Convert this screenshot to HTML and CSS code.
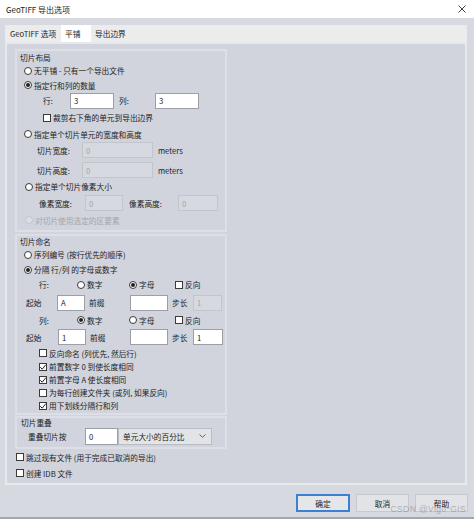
FILE: index.html
```html
<!DOCTYPE html>
<html lang="zh-CN">
<head>
    <meta charset="UTF-8">
    <meta name="viewport" content="width=device-width, initial-scale=1.0">
    <title>GeoTIFF 导出选项</title>
    <link rel="stylesheet" href="styles.css">
</head>
<body>
    <div class="dialog">
        <div class="titleBar">
            <span>GeoTIFF 导出选项</span>
            <svg class="closeIcon" width="8" height="8" viewBox="0 0 8 8">
                <path d="M0.5 0.5 L7.5 7.5 M7.5 0.5 L0.5 7.5" stroke="#2b2b2b" stroke-width="0.9" fill="none"/>
            </svg>
        </div>

        <div class="frame">
            <div class="tabs">
                <div class="tab tabFirst">GeoTIFF 选项</div>
                <div class="tab tabActive">平铺</div>
                <div class="tab tabLast">导出边界</div>
            </div>

            <div class="panel">
                <!-- 切片布局 -->
                <div class="group groupLayout">
                    <div class="groupTitle h12">切片布局</div>
                    <div class="row h15 in7"><span class="radio"></span>无平铺 - 只有一个导出文件</div>
                    <div class="row h14 in7"><span class="radio on"></span>指定行和列的数量</div>
                    <div class="row h17 in26">
                        <span class="lbl w27">行:</span>
                        <span class="field w44">3</span>
                        <span class="lbl w36 ml5">列:</span>
                        <span class="field w44">3</span>
                    </div>
                    <div class="row h17 in26"><span class="check"></span>裁剪右下角的单元到导出边界</div>
                    <div class="row h16 in7"><span class="radio"></span>指定单个切片单元的宽度和高度</div>
                    <div class="row h16 in20">
                        <span class="lbl w45">切片宽度:</span>
                        <span class="field off w71">0</span>
                        <span class="unit">meters</span>
                    </div>
                    <div class="row h16 in20 mt4">
                        <span class="lbl w45">切片高度:</span>
                        <span class="field off w71">0</span>
                        <span class="unit">meters</span>
                    </div>
                    <div class="row h17 in8"><span class="radio"></span>指定单个切片像素大小</div>
                    <div class="row h16 in22">
                        <span class="lbl w46">像素宽度:</span>
                        <span class="field off w38">0</span>
                        <span class="lbl w49 ml6">像素高度:</span>
                        <span class="field off w40">0</span>
                    </div>
                    <div class="row h18 in8 muted"><span class="radio dis"></span>对切片使用选定的区要素</div>
                </div>

                <!-- 切片命名 -->
                <div class="group groupNaming">
                    <div class="groupTitle h10">切片命名</div>
                    <div class="row h17 in7"><span class="radio"></span>序列编号 (按行优先的顺序)</div>
                    <div class="row h13 in7"><span class="radio on"></span>分隔 行/列 的字母或数字</div>
                    <div class="row h17 in22">
                        <span class="lbl w38">行:</span>
                        <span class="opt w52"><span class="radio"></span>数字</span>
                        <span class="opt w46"><span class="radio on"></span>字母</span>
                        <span class="opt"><span class="check"></span>反向</span>
                    </div>
                    <div class="row h19 in9">
                        <span class="lbl w31">起始</span>
                        <span class="field w28">A</span>
                        <span class="lbl w41 ml4">前缀</span>
                        <span class="field w38"></span>
                        <span class="lbl w21 ml4">步长</span>
                        <span class="field off w29">1</span>
                    </div>
                    <div class="row h16 in22">
                        <span class="lbl w38">列:</span>
                        <span class="opt w52"><span class="radio on"></span>数字</span>
                        <span class="opt w46"><span class="radio"></span>字母</span>
                        <span class="opt"><span class="check"></span>反向</span>
                    </div>
                    <div class="row h18 in9">
                        <span class="lbl w32">起始</span>
                        <span class="field w28">1</span>
                        <span class="lbl w40 ml4">前缀</span>
                        <span class="field w38"></span>
                        <span class="lbl w21 ml4">步长</span>
                        <span class="field w30">1</span>
                    </div>
                    <div class="row h14 in22"><span class="check"></span>反向命名 (列优先, 然后行)</div>
                    <div class="row h13 in22">
                        <span class="check on"><svg width="8" height="8" viewBox="0 0 8 8"><path d="M1.2 4.2 L3.2 6.2 L6.9 1.6" stroke="#222" stroke-width="1" fill="none"/></svg></span>前置数字 0 到使长度相同
                    </div>
                    <div class="row h13 in22">
                        <span class="check on"><svg width="8" height="8" viewBox="0 0 8 8"><path d="M1.2 4.2 L3.2 6.2 L6.9 1.6" stroke="#222" stroke-width="1" fill="none"/></svg></span>前置字母 A 使长度相同
                    </div>
                    <div class="row h13 in22"><span class="check"></span>为每行创建文件夹 (或列, 如果反向)</div>
                    <div class="row h13 in22">
                        <span class="check on"><svg width="8" height="8" viewBox="0 0 8 8"><path d="M1.2 4.2 L3.2 6.2 L6.9 1.6" stroke="#222" stroke-width="1" fill="none"/></svg></span>用下划线分隔行和列
                    </div>
                </div>

                <!-- 切片重叠 -->
                <div class="group groupOverlap">
                    <div class="groupTitle h8 in4">切片重叠</div>
                    <div class="row h20 in11">
                        <span class="lbl w57">重叠切片按</span>
                        <span class="field w33 tall">0</span>
                        <span class="select">
                            <span>单元大小的百分比</span>
                            <svg width="7" height="4" viewBox="0 0 7 4"><path d="M0.5 0.5 L3.5 3.3 L6.5 0.5" stroke="#555" stroke-width="0.9" fill="none"/></svg>
                        </span>
                    </div>
                </div>

                <div class="row h16 in9"><span class="check"></span>跳过现有文件 (用于完成已取消的导出)</div>
                <div class="row h16 in9"><span class="check"></span>创建 IDB 文件</div>
            </div>

            <div class="footer">
                <button class="btn btnDefault">确定</button>
                <button class="btn">取消</button>
                <button class="btn">帮助</button>
            </div>
        </div>

        <div class="watermark">CSDN @Vigo*GIS</div>
    </div>
</body>
</html>
```

FILE: styles.css
```css
* {
    margin: 0;
    padding: 0;
    box-sizing: border-box;
}

body {
    width: 474px;
    height: 519px;
    overflow: hidden;
    background: #d6d9df;
    font-family: "Noto Sans CJK SC", "Microsoft YaHei", sans-serif;
    font-size: 7.7px;
    color: #1c1c1c;
}

.dialog {
    position: relative;
    height: 519px;
    border-bottom: 2px solid #a4a7ac;
}

.titleBar {
    height: 18px;
    background: #ffffff;
    display: flex;
    align-items: center;
    justify-content: space-between;
    padding: 0 8px 0 6px;
    font-size: 8px;
}

.frame {
    padding: 7px 7px 0 5px;
}

/* tab strip */
.tabs {
    height: 17px;
    background: #ececec;
    display: flex;
}

.tab {
    display: flex;
    align-items: center;
}

.tabFirst {
    width: 56px;
    padding-left: 5px;
}

.tabActive {
    width: 30px;
    padding-left: 4px;
    background: #ffffff;
}

.tabLast {
    padding-left: 4px;
}

/* page */
.panel {
    height: 443px;
    background: #d1d4dc;
    border: 2px solid #e6e8ec;
    padding: 5px 0 0 0;
    overflow: hidden;
}

.group {
    width: 212px;
    margin-left: 8px;
    border: 2px solid #dcdfe5;
    padding-bottom: 1px;
}

.groupNaming {
    margin-top: 2px;
}

.groupOverlap {
    margin-top: 1px;
}

.groupTitle {
    display: flex;
    align-items: center;
    padding-left: 3px;
}

.row {
    display: flex;
    align-items: center;
    white-space: nowrap;
}

.muted {
    color: #a3a6ab;
}

/* row heights */
.h8 { height: 8px; }
.h10 { height: 10px; }
.h12 { height: 12px; }
.h13 { height: 13px; }
.h14 { height: 14px; }
.h15 { height: 15px; }
.h16 { height: 16px; }
.h17 { height: 17px; }
.h18 { height: 18px; }
.h19 { height: 19px; }
.h20 { height: 20px; }

/* indents */
.in4 { padding-left: 4px; }
.in7 { padding-left: 7px; }
.in8 { padding-left: 8px; }
.in9 { padding-left: 9px; }
.in11 { padding-left: 11px; }
.in20 { padding-left: 20px; }
.in22 { padding-left: 22px; }
.in26 { padding-left: 26px; }

.mt4 { margin-top: 4px; }
.ml4 { margin-left: 4px; }
.ml5 { margin-left: 5px; }
.ml6 { margin-left: 6px; }

/* widths */
.w21 { width: 21px; }
.w27 { width: 27px; }
.w28 { width: 28px; }
.w29 { width: 29px; }
.w30 { width: 30px; }
.w31 { width: 31px; }
.w32 { width: 32px; }
.w33 { width: 33px; }
.w36 { width: 36px; }
.w38 { width: 38px; }
.w40 { width: 40px; }
.w41 { width: 41px; }
.w44 { width: 44px; }
.w45 { width: 45px; }
.w46 { width: 46px; }
.w49 { width: 49px; }
.w52 { width: 52px; }
.w57 { width: 57px; }
.w71 { width: 71px; }

.lbl {
    flex-shrink: 0;
}

.opt {
    display: flex;
    align-items: center;
    flex-shrink: 0;
}

/* text boxes */
.field {
    flex-shrink: 0;
    height: 16px;
    background: #ffffff;
    border: 1px solid #9c9fa5;
    display: flex;
    align-items: center;
    padding-left: 3px;
}

.field.off {
    background: #d6d9df;
    border-color: #c2c5cb;
    color: #a2a5aa;
}

.field.tall {
    height: 17px;
}

.unit {
    margin-left: 5px;
}

.select {
    width: 94px;
    height: 17px;
    background: #e2e4e8;
    border: 1px solid #b9bcc2;
    display: flex;
    align-items: center;
    justify-content: space-between;
    padding: 0 5px 0 4px;
}

/* radio buttons and check boxes */
.radio {
    width: 8px;
    height: 8px;
    border: 1px solid #3a3a3a;
    border-radius: 50%;
    background: #ffffff;
    margin-right: 2px;
    flex-shrink: 0;
    position: relative;
}

.radio.on::after {
    content: '';
    position: absolute;
    left: 1px;
    top: 1px;
    width: 4px;
    height: 4px;
    border-radius: 50%;
    background: #202020;
}

.radio.dis {
    border-color: #c3c6cb;
    background: #dcdee3;
}

.check {
    width: 8px;
    height: 8px;
    border: 1px solid #3a3a3a;
    background: #ffffff;
    margin-right: 2px;
    flex-shrink: 0;
    display: flex;
}

.check svg {
    margin: -1px;
}

/* buttons */
.footer {
    display: flex;
    justify-content: flex-end;
    gap: 6px;
    padding: 9px 0 0 0;
    margin-right: -1px;
}

.btn {
    width: 53px;
    height: 18px;
    font-family: inherit;
    font-size: 7.7px;
    color: #1c1c1c;
    background: #e1e3e7;
    border: 1px solid #c6c9ce;
}

.btnDefault {
    width: 54px;
    border: 2px solid #3d7fd3;
    background: #e4e6ea;
}

.watermark {
    position: absolute;
    right: 8px;
    bottom: 3px;
    font-family: "Liberation Sans", sans-serif;
    font-size: 8.5px;
    color: rgba(120, 120, 120, 0.5);
    letter-spacing: 0.4px;
}
```
